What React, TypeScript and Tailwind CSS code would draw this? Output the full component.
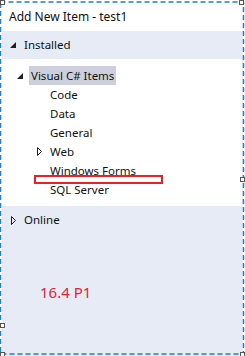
const rows = [
  { label: "Code", arrow: false },
  { label: "Data", arrow: false },
  { label: "General", arrow: false },
  { label: "Web", arrow: true },
  { label: "Windows Forms", arrow: false },
  { label: "SQL Server", arrow: false },
];

function Handle({ className }: { className: string }) {
  return <div className={`absolute w-[5px] h-[5px] bg-white border border-[#555] ${className}`} />;
}

function Filled() {
  return (
    <svg width="6" height="6" viewBox="0 0 6 6" className="shrink-0">
      <path d="M6 0 L6 6 L0 6 Z" fill="#1e1e1e" />
    </svg>
  );
}

function Open() {
  return (
    <svg width="5" height="9" viewBox="0 0 5 9" className="shrink-0">
      <path d="M0.5 0.5 L4.5 4.5 L0.5 8.5 Z" fill="none" stroke="#1e1e1e" strokeWidth="1" />
    </svg>
  );
}

export default function App() {
  return (
    <div
      className="relative w-[245px] h-[356px] bg-white overflow-hidden text-[11.5px] text-[#111]"
      style={{ fontFamily: '"Segoe UI", "Noto Sans", sans-serif' }}
    >
      <div className="flex flex-col h-full pt-[3px]">
        {/* Title */}
        <div className="h-[28px] flex items-center pl-[9px] text-[12px]">Add New Item - test1</div>

        {/* Tree panel */}
        <div className="flex-1 flex flex-col bg-[#e6ebf5] ml-[2px] mr-[2px]">
          <div className="h-[28px] flex items-center pl-[8px] gap-[8px]">
            <Filled />
            <span>Installed</span>
          </div>

          <div className="relative bg-white mr-[1px] pt-[7px] pb-[7px]">
            <div className="h-[19px] flex items-center pl-[15px]">
              <Filled />
              <span className="ml-[6px] h-[19px] flex items-center px-[2px] bg-[#cdd0dc]">Visual C# Items</span>
            </div>
            {rows.map((r) => (
              <div key={r.label} className="h-[19px] flex items-center">
                <div className="w-[48px] flex justify-end pr-[8px]">{r.arrow && <Open />}</div>
                <span>{r.label}</span>
              </div>
            ))}
            <div className="absolute left-[32px] top-[116px] w-[129px] h-[9px] border-2 border-[#e8202a]" />
          </div>

          <div className="h-[28px] flex items-center pl-[9px] gap-[8px]">
            <Open />
            <span>Online</span>
          </div>

          <div className="pl-[38px] pt-[47px] text-[15px] text-[#e8203a]">16.4 P1</div>
        </div>
      </div>

      {/* selection frame */}
      <svg className="absolute inset-0 pointer-events-none" width="245" height="356">
        <rect x="0.5" y="2" width="243" height="352" fill="none" stroke="#1a7fe0" strokeWidth="1.5" strokeDasharray="5 3" />
      </svg>
      <Handle className="left-0 top-0" />
      <Handle className="right-[1px] top-0" />
      <Handle className="right-0 top-[177px]" />
      <Handle className="left-0 top-[323px]" />
      <Handle className="left-0 top-[352px]" />
      <Handle className="right-0 top-[352px]" />
    </div>
  );
}
